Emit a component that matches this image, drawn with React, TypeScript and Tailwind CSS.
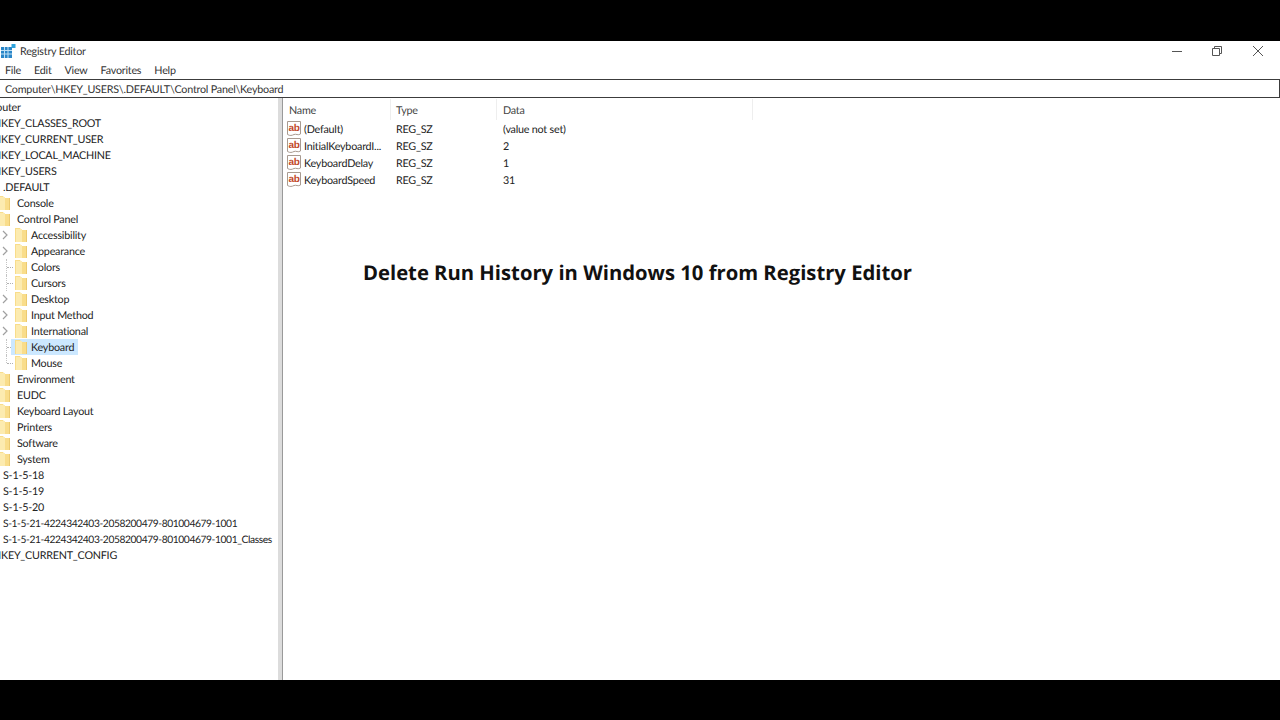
const font = "[font-family:'Lato','Open_Sans',sans-serif] [text-rendering:geometricPrecision]";

const menus = ["File", "Edit", "View", "Favorites", "Help"];

type Node = {
  label: string;
  x: number; // text offset from tree left edge, can be negative (clipped)
  level?: 0 | 1 | 2;
  chevron?: boolean;
  selected?: boolean;
  dots?: boolean;
  last?: boolean;
  long?: boolean;
};

const tree: Node[] = [
  { label: "Computer", x: -25 },
  { label: "HKEY_CLASSES_ROOT", x: -7 },
  { label: "HKEY_CURRENT_USER", x: -7 },
  { label: "HKEY_LOCAL_MACHINE", x: -7 },
  { label: "HKEY_USERS", x: -7 },
  { label: ".DEFAULT", x: 3 },
  { label: "Console", x: 17, level: 1 },
  { label: "Control Panel", x: 17, level: 1 },
  { label: "Accessibility", x: 31, level: 2, chevron: true },
  { label: "Appearance", x: 31, level: 2, chevron: true },
  { label: "Colors", x: 31, level: 2, dots: true },
  { label: "Cursors", x: 31, level: 2, dots: true },
  { label: "Desktop", x: 31, level: 2, chevron: true },
  { label: "Input Method", x: 31, level: 2, chevron: true },
  { label: "International", x: 31, level: 2, chevron: true },
  { label: "Keyboard", x: 31, level: 2, selected: true, dots: true },
  { label: "Mouse", x: 31, level: 2, dots: true, last: true },
  { label: "Environment", x: 17, level: 1 },
  { label: "EUDC", x: 17, level: 1 },
  { label: "Keyboard Layout", x: 17, level: 1 },
  { label: "Printers", x: 17, level: 1 },
  { label: "Software", x: 17, level: 1 },
  { label: "System", x: 17, level: 1 },
  { label: "S-1-5-18", x: 3 },
  { label: "S-1-5-19", x: 3 },
  { label: "S-1-5-20", x: 3 },
  { label: "S-1-5-21-4224342403-2058200479-801004679-1001", x: 3, long: true },
  { label: "S-1-5-21-4224342403-2058200479-801004679-1001_Classes", x: 3, long: true },
  { label: "HKEY_CURRENT_CONFIG", x: -7 },
];

const values = [
  { name: "(Default)", data: "(value not set)" },
  { name: "InitialKeyboardI...", data: "2" },
  { name: "KeyboardDelay", data: "1" },
  { name: "KeyboardSpeed", data: "31" },
];

function Folder() {
  return (
    <svg width="12" height="15" viewBox="0 0 12 15" className="shrink-0">
      <path d="M0 1h5l1.500 2h5.500v12h-12z" fill="#f9dd8b" />
      <rect x="1" y="2" width="6" height="13" fill="#fcebb0" />
      <rect x="11" y="3" width="1" height="12" fill="#ecca70" />
    </svg>
  );
}

function AbIcon() {
  return (
    <svg width="15" height="16" viewBox="0 0 15 16" className="shrink-0">
      <path d="M0.500 0.500h13v12.500c-2.500 1.800-4.500-0.500-6.500 0.500s-4 1.500-6.500 0z" fill="#fff" stroke="#a89a90" strokeWidth="1" />
      <text x="1.500" y="10" fontSize="10" fontWeight="700" fill="#c2492a" fontFamily="Liberation Sans, sans-serif">ab</text>
    </svg>
  );
}

function AppIcon() {
  return (
    <svg width="15" height="15" viewBox="0 0 15 15" className="shrink-0">
      <rect x="0" y="3" width="11" height="11" fill="#2a86c8" />
      <path d="M0 6.500h11M0 10h11M3.500 3v11M7 3v11" stroke="#bfe0f4" strokeWidth="1" />
      <rect x="10.500" y="0" width="4" height="4" fill="#2fa3dc" />
    </svg>
  );
}

function TreeRow({ node }: { node: Node }) {
  const iconLeft = node.level === 2 ? 15 : -2;
  return (
    <div className="h-4 pt-[2px] flex items-center relative whitespace-nowrap">
      {node.chevron && (
        <svg width="6" height="10" viewBox="0 0 6 10" className="absolute left-[2px] top-[3px]">
          <path d="M1 1l4 4-4 4" fill="none" stroke="#a0a0a0" strokeWidth="1.200" />
        </svg>
      )}
      {node.dots && (
        <>
          <div className="absolute left-[7px] top-[8px] w-[6px] border-t border-dotted border-[#b0b0b0]" />
          <div className={`absolute left-[6px] top-0 border-l border-dotted border-[#c4c4c4] ${node.last ? "h-[8px]" : "h-4"}`} />
        </>
      )}
      {node.selected && <div className="absolute left-[11px] top-0 w-[67px] h-4 bg-[#cce8ff]" />}
      {node.level ? (
        <div className="absolute top-0" style={{ left: iconLeft }}>
          <Folder />
        </div>
      ) : null}
      <span
        className={`relative ${node.long ? "text-[10.25px] tracking-[-0.4px]" : ""}`}
        style={{ marginLeft: node.x }}
      >
        {node.label}
      </span>
    </div>
  );
}

export default function App() {
  return (
    <div className={`w-[1280px] h-[720px] bg-black flex flex-col overflow-hidden text-[#222222] text-[10.75px] tracking-[-0.22px] leading-4 ${font}`}>
      <div className="h-[41px] shrink-0" />
      <div className="flex-1 min-h-0 bg-white flex flex-col">
        <div className="h-5 shrink-0 flex items-center pl-[1px] pr-[17px]">
          <AppIcon />
          <span className="ml-1 pt-[2px] text-[#333333]">Registry Editor</span>
          <div className="ml-auto flex items-center gap-[30px]">
            <div className="w-[10px] h-[1px] bg-[#555555]" />
            <svg width="10" height="10" viewBox="0 0 10 10">
              <path d="M0.500 2.500h7v7h-7zM2.500 2.500v-2h7v7h-2" fill="none" stroke="#555555" strokeWidth="1" />
            </svg>
            <svg width="10" height="10" viewBox="0 0 10 10" className="ml-[1px]">
              <path d="M0 0l10 10M10 0l-10 10" fill="none" stroke="#555555" strokeWidth="1" />
            </svg>
          </div>
        </div>
        <div className="h-[18px] pt-[2px] shrink-0 flex items-center pl-[5px] gap-[13px] text-[#333333]">
          {menus.map((m) => (
            <span key={m}>{m}</span>
          ))}
        </div>
        <div className="h-[19px] pt-[2px] shrink-0 border border-l-0 border-[#3c3c3c] flex items-center pl-[5px] text-[#333333]">
          Computer\HKEY_USERS\.DEFAULT\Control Panel\Keyboard
        </div>
        <div className="flex-1 min-h-0 flex">
          <div className="w-[278px] shrink-0 overflow-hidden pt-[1px]">
            {tree.map((n) => (
              <TreeRow key={n.label} node={n} />
            ))}
          </div>
          <div className="w-[5px] shrink-0 bg-[#dcdcdc] border-r border-[#9a9a9a]" />
          <div className="flex-1 min-w-0">
            <div className="flex h-[22px] pt-[1px] items-center text-[#444444]">
              <div className="w-[108px] pl-[6px] pt-[2px] h-full flex items-center border-r border-[#eeeeee]">Name</div>
              <div className="w-[106px] pl-[5px] pt-[2px] h-full flex items-center border-r border-[#eeeeee]">Type</div>
              <div className="w-[256px] pl-[6px] pt-[2px] h-full flex items-center border-r border-[#eeeeee]">Data</div>
            </div>
            {values.map((v) => (
              <div key={v.name} className="flex h-[17px] items-center whitespace-nowrap">
                <div className="w-[108px] pl-[4px] flex items-center gap-[2px]">
                  <AbIcon />
                  <span className="pt-[2px]">{v.name}</span>
                </div>
                <div className="w-[107px] pl-[5px] pt-[2px]">REG_SZ</div>
                <div className="pl-[5px] pt-[2px]">{v.data}</div>
              </div>
            ))}
            <div className="mt-[70px] ml-[80px] text-[20.25px] tracking-normal leading-7 font-bold text-[#111111] whitespace-nowrap [font-family:'Open_Sans',sans-serif]">
              Delete Run History in Windows 10 from Registry Editor
            </div>
          </div>
        </div>
      </div>
      <div className="h-10 shrink-0" />
    </div>
  );
}
